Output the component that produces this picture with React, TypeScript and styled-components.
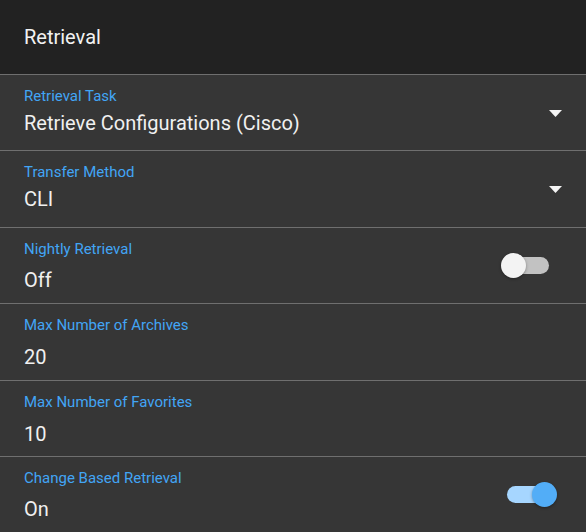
import React from "react";
import styled, { createGlobalStyle } from "styled-components";

const GlobalStyle = createGlobalStyle`
  html, body { margin: 0; padding: 0; background: #363636; }
  body { font-family: Roboto, "Noto Sans", "Liberation Sans", sans-serif; }
  * { box-sizing: border-box; }
`;

const Page = styled.div`
  width: 586px;
  height: 532px;
  overflow: hidden;
  background: #363636;
  display: flex;
  flex-direction: column;
`;

const Header = styled.div`
  height: 74px;
  flex: none;
  background: #222222;
  display: flex;
  align-items: center;
  padding: 0 24px;
  font-size: 20px;
  line-height: 24px;
  color: #f2f2f2;
`;

const Row = styled.div`
  height: 76.4px;
  flex: none;
  border-top: 1px solid #6f6f6f;
  display: flex;
  align-items: center;
  justify-content: space-between;
  padding: 0 24px;
`;

const Field = styled.div<{ $gap: number }>`
  display: flex;
  flex-direction: column;
  gap: ${(p) => p.$gap}px;
  align-self: flex-start;
  padding-top: 12px;
`;

const Label = styled.div`
  font-size: 15px;
  line-height: 18px;
  color: #42a5f5;
`;

const Value = styled.div`
  font-size: 20px;
  line-height: 24px;
  color: #f0f0f0;
`;

const Arrow = styled.svg`
  width: 13px;
  height: 7px;
  margin-top: 1px;
  fill: #f5f5f5;
`;

const SwitchRoot = styled.div`
  position: relative;
  width: 56px;
  height: 25px;
  margin-right: 5px;
`;

const Track = styled.div<{ $on: boolean }>`
  position: absolute;
  left: 6px;
  top: 4px;
  width: 42px;
  height: 17px;
  border-radius: 9px;
  background: ${(p) => (p.$on ? "#a6d6ff" : "#c2c2c2")};
`;

const Thumb = styled.div<{ $on: boolean }>`
  position: absolute;
  top: 0;
  left: ${(p) => (p.$on ? 31 : 0)}px;
  width: 25px;
  height: 25px;
  border-radius: 50%;
  background: ${(p) => (p.$on ? "#52adf7" : "#f3f3f3")};
  box-shadow: 0 1px 3px rgba(0, 0, 0, 0.35);
`;

const DropArrow = () => (
  <Arrow viewBox="0 0 13 7">
    <path d="M0 0 L13 0 L6.5 7 Z" />
  </Arrow>
);

const Switch = ({ on }: { on: boolean }) => (
  <SwitchRoot>
    <Track $on={on} />
    <Thumb $on={on} />
  </SwitchRoot>
);

type Item = {
  label: string;
  value: string;
  kind: "select" | "toggle" | "number";
  on?: boolean;
};

const items: Item[] = [
  { label: "Retrieval Task", value: "Retrieve Configurations (Cisco)", kind: "select" },
  { label: "Transfer Method", value: "CLI", kind: "select" },
  { label: "Nightly Retrieval", value: "Off", kind: "toggle", on: false },
  { label: "Max Number of Archives", value: "20", kind: "number" },
  { label: "Max Number of Favorites", value: "10", kind: "number" },
  { label: "Change Based Retrieval", value: "On", kind: "toggle", on: true },
];

const gapFor = (k: Item["kind"]) => (k === "select" ? 6 : k === "toggle" ? 10 : 11);

export default function App() {
  return (
    <Page>
      <GlobalStyle />
      <Header>Retrieval</Header>
      {items.map((it) => (
        <Row key={it.label}>
          <Field $gap={gapFor(it.kind)}>
            <Label>{it.label}</Label>
            <Value>{it.value}</Value>
          </Field>
          {it.kind === "select" && <DropArrow />}
          {it.kind === "toggle" && <Switch on={!!it.on} />}
        </Row>
      ))}
    </Page>
  );
}
